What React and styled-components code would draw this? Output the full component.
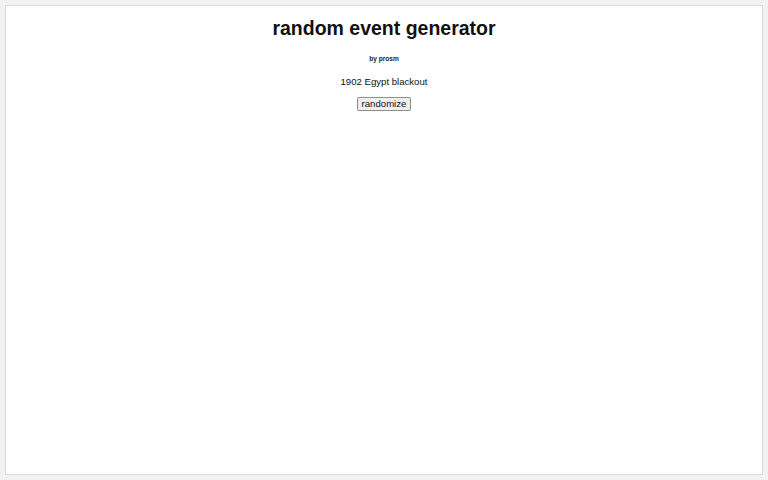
import React from "react";
import styled, { createGlobalStyle } from "styled-components";

const Global = createGlobalStyle`
  html, body { margin: 0; padding: 0; }
  body {
    background: #f2f2f2;
    font-family: "Liberation Sans", Arial, sans-serif;
    color: #000;
  }
`;

const Frame = styled.div`
  padding: 5px;
  height: 480px;
  box-sizing: border-box;
`;

const Card = styled.main`
  height: 100%;
  box-sizing: border-box;
  background: #fff;
  border: 1px solid #dcdcdc;
  display: flex;
  flex-direction: column;
  align-items: center;
  font-size: 9.5px;
  text-align: center;
`;

const Title = styled.h1`
  font-size: 19.5px;
  font-weight: bold;
  margin: 11px 0 0;
  color: #111;
`;

const Byline = styled.h6`
  font-size: 6.6px;
  font-weight: bold;
  margin: 15px 0 0;
  color: #222;
`;

const EventText = styled.p`
  font-size: 9.6px;
  margin: 14px 0 0;
  color: #111;
`;

const Button = styled.button`
  margin-top: 10px;
  height: 14px;
  box-sizing: border-box;
  font-family: "Liberation Sans", Arial, sans-serif;
  font-size: 9.6px;
  line-height: 1;
  padding: 0 4px;
  background: #efefef;
  border: 1px solid #8f8f8f;
  border-radius: 2px;
  color: #111;
`;

export default function App() {
  return (
    <>
      <Global />
      <Frame>
        <Card>
          <Title>random event generator</Title>
          <Byline>by prosm</Byline>
          <EventText>1902 Egypt blackout</EventText>
          <Button>randomize</Button>
        </Card>
      </Frame>
    </>
  );
}
